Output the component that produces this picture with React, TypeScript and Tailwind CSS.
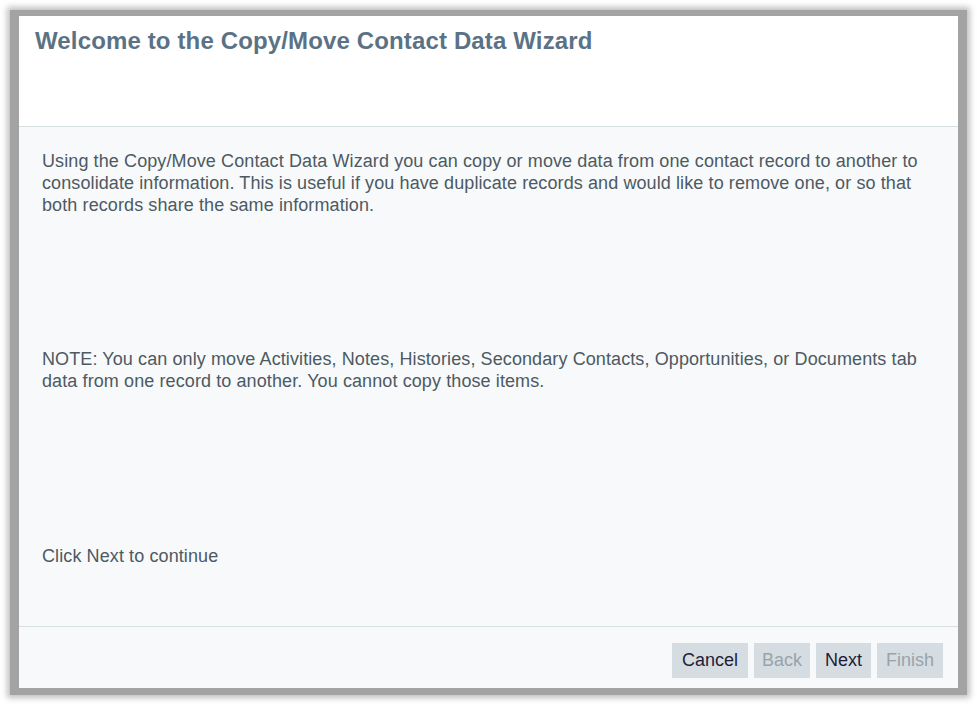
export default function App() {
  return (
    <div className="w-[977px] h-[704px] bg-white pl-[10px] pt-[10px] font-['Liberation_Sans',Arial,sans-serif]">
      <div className="w-[957px] h-[685px] bg-[#a3a3a3] pl-[9px] pr-[9px] pt-[6px] pb-[7px] shadow-[0_0_6px_3px_rgba(0,0,0,0.25)]">
        <div className="flex flex-col h-full bg-[#f7f9fa]">
          <div className="h-[111px] bg-white border-b border-[#d7dfe3] px-4 pt-[10px]">
            <h1 className="text-[24px] font-bold text-[#5b7285] leading-[30px] tracking-[0.14px]">
              Welcome to the Copy/Move Contact Data Wizard
            </h1>
          </div>
          <div className="flex-1 px-[23px] pt-[23px] text-[18px] leading-[22px] text-[#4d5963] tracking-[0.1px]">
            <p>
              Using the Copy/Move Contact Data Wizard you can copy or move data from one contact record to another to
              consolidate information. This is useful if you have duplicate records and would like to remove one, or so that
              both records share the same information.
            </p>
            <p className="mt-[132px]">
              NOTE: You can only move Activities, Notes, Histories, Secondary Contacts, Opportunities, or Documents tab
              data from one record to another. You cannot copy those items.
            </p>
            <p className="mt-[153px]">Click Next to continue</p>
          </div>
          <div className="h-[62px] border-t border-[#d7dfe3] flex justify-end items-start pt-[16px] pr-[15px] gap-[6px]">
            <button className="h-[35px] px-[10px] bg-[#d5dde2] text-[18px] text-[#1d1d38]">Cancel</button>
            <button className="h-[35px] px-[8px] bg-[#d5dde2] text-[18px] text-[#9aa3aa]">Back</button>
            <button className="h-[35px] px-[9px] bg-[#d5dde2] text-[18px] text-[#1d1d38]">Next</button>
            <button className="h-[35px] px-[9px] bg-[#d5dde2] text-[18px] text-[#9aa3aa]">Finish</button>
          </div>
        </div>
      </div>
    </div>
  );
}
